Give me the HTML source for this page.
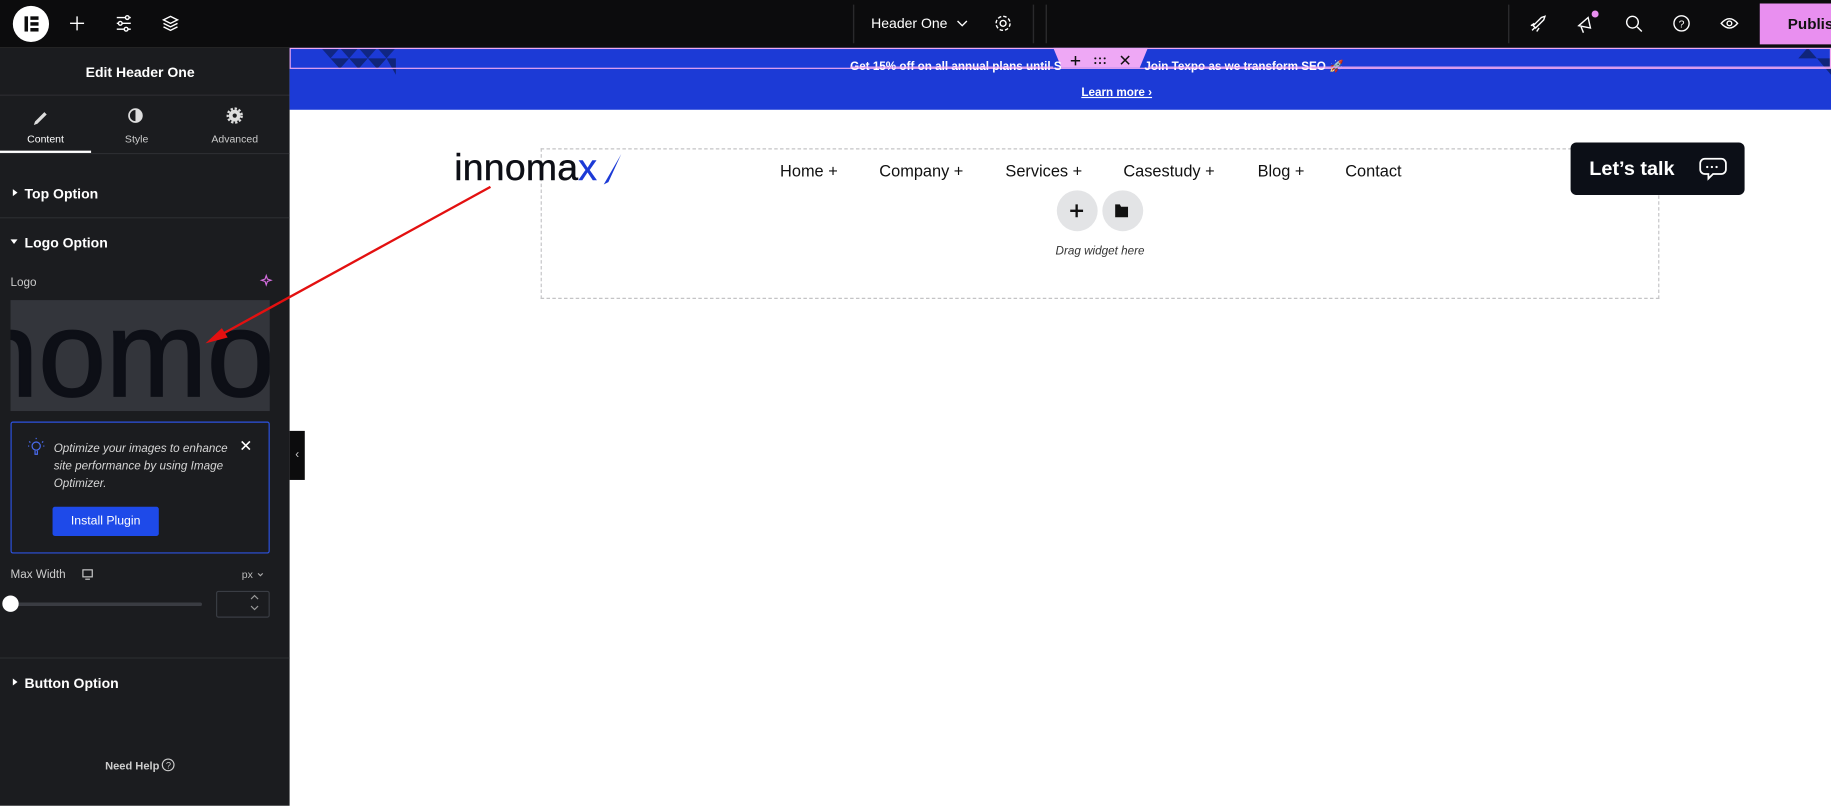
<!DOCTYPE html>
<html><head><meta charset="utf-8"><style>
*{margin:0;padding:0;box-sizing:border-box}
html,body{width:1831px;height:806px;overflow:hidden;background:#fff}
#w{width:1568px;height:690px;transform:scale(1.16773);transform-origin:0 0;position:relative;font-family:"Liberation Sans",sans-serif}
.a{position:absolute}
.t{position:absolute;white-space:nowrap}
.sb{color:#fff;font-weight:bold;font-size:12px}
svg{position:absolute;overflow:visible}
</style></head><body><div id="w">
<!-- top bar -->
<div class="a" style="left:0;top:0;width:1568px;height:41px;background:#0c0c0d"></div>
<div class="a" style="left:11px;top:5px;width:31px;height:31px;border-radius:50%;background:#fff"></div>
<div class="a" style="left:21px;top:14px;width:3px;height:13px;background:#0c0c0d"></div>
<div class="a" style="left:26px;top:14px;width:7px;height:3px;background:#0c0c0d"></div>
<div class="a" style="left:26px;top:19px;width:7px;height:3px;background:#0c0c0d"></div>
<div class="a" style="left:26px;top:24px;width:7px;height:3px;background:#0c0c0d"></div>
<svg style="left:0;top:0" width="1568" height="41" fill="none" stroke="#fff" stroke-width="1.2">
<path d="M66 14v12M60 20h12"/>
<path d="M100 15h12M100 20h12M100 25h12"/><circle cx="109" cy="15" r="1.6" fill="#0c0c0d"/><circle cx="103" cy="20" r="1.6" fill="#0c0c0d"/><circle cx="108" cy="25" r="1.6" fill="#0c0c0d"/>
<path d="M146 14l6 3-6 3-6-3z M140 20l6 3 6-3 M140 23l6 3 6-3"/>
<path d="M731 4v33M885 4v33M896 4v33M1292 4v33" stroke="#2a2a2c"/>
<path d="M820 18l4 4 4-4"/>
<circle cx="859" cy="20" r="2.5"/><circle cx="859" cy="20" r="6" stroke-dasharray="3 1.7"/>
<path d="M1312 26l3-3m-2-1l7-7 3-1-1 3-7 7zM1311 22l3-2M1316 27l2-3"/>
<path d="M1352 22l8-7 2 9zM1354 23l2 5"/><circle cx="1366" cy="12" r="3" fill="#e98ff0" stroke="none"/>
<circle cx="1398" cy="19" r="5"/><path d="M1402 23l4 4"/>
<circle cx="1440" cy="20" r="6.5"/><text x="1437.5" y="23.5" fill="#fff" stroke="none" font-size="9" font-family="Liberation Sans">?</text>
<path d="M1474 20q7-8 14 0q-7 8-14 0z"/><circle cx="1481" cy="20" r="2"/>
</svg>
<div class="t" style="left:746px;top:13px;color:#fff;font-size:12px">Header One</div>
<div class="a" style="left:1507px;top:3px;width:61px;height:35px;background:#e98ff0"></div>
<div class="t" style="left:1531px;top:13px;font-size:13px;font-weight:bold;color:#111">Publis</div>

<!-- sidebar -->
<div class="a" style="left:0;top:41px;width:248px;height:649px;background:#1b1c1f"></div>
<div class="t sb" style="left:0;width:240px;text-align:center;top:55px">Edit Header One</div>
<div class="a" style="left:0;top:81px;width:248px;height:1px;background:#2c2d31"></div>
<svg style="left:0;top:0" width="248" height="690" fill="#ddd">
<path d="M30 104l8-8 2 2-8 8-3 1z"/>
<circle cx="116" cy="99" r="5.5" fill="none" stroke="#ddd" stroke-width="1.5"/><path d="M116 93.5a5.5 5.5 0 0 1 0 11z"/>
<circle cx="201" cy="99" r="5"/><circle cx="201" cy="99" r="6" fill="none" stroke="#ddd" stroke-width="2" stroke-dasharray="2 1.5"/><circle cx="201" cy="99" r="1.8" fill="#1b1c1f"/>
<path d="M11 162l4 3-4 3z M9 205l6 0-3 4z" fill="#fff"/>
<path d="M11 581l4 3-4 3z" fill="#fff"/>
<path d="M228 236l1 3 3 1-3 1-1 3-1-3-3-1 3-1z" fill="none" stroke="#d66ee0"/>
</svg>
<div class="t" style="left:0;width:78px;text-align:center;top:114px;color:#fff;font-size:9px">Content</div>
<div class="t" style="left:78px;width:78px;text-align:center;top:114px;color:#ccc;font-size:9px">Style</div>
<div class="t" style="left:162px;width:78px;text-align:center;top:114px;color:#ccc;font-size:9px">Advanced</div>
<div class="a" style="left:0;top:129px;width:78px;height:2px;background:#fff"></div>
<div class="a" style="left:0;top:131px;width:248px;height:1px;background:#2c2d31"></div>
<div class="t sb" style="left:21px;top:159px">Top Option</div>
<div class="a" style="left:0;top:186px;width:248px;height:1px;background:#2c2d31"></div>
<div class="t sb" style="left:21px;top:201px">Logo Option</div>
<div class="t" style="left:9px;top:237px;color:#ccc;font-size:10px">Logo</div>
<div class="a" style="left:9px;top:257px;width:222px;height:95px;background:#33353b;overflow:hidden">
<div class="t" style="left:-34px;top:-12px;font-size:104px;color:#0d0f16;letter-spacing:0px;-webkit-text-stroke:1.5px #0d0f16">nomo</div></div>
<div class="a" style="left:9px;top:361px;width:222px;height:113px;border:1px solid #2c52e0;border-radius:2px"></div>
<svg style="left:0;top:0" width="248" height="690" fill="none" stroke="#4a6cf0" stroke-width="1">
<circle cx="31" cy="382" r="3.5"/><path d="M30 386v3h2v-3M31 375v1M25 378l1 1M37 378l-1 1M24 382h1M37 382h1"/>
<path d="M207 378l7 7M214 378l-7 7" stroke="#fff" stroke-width="1.4"/>
<rect x="71" y="488" width="8" height="6" stroke="#ccc"/><path d="M73 496h4" stroke="#ccc"/>
<path d="M221 491l2 2 2-2" stroke="#aaa"/>
<path d="M215 513l3-3 3 3M215 519l3 3 3-3" stroke="#999"/>
<circle cx="144" cy="655" r="5" stroke="#ccc"/>
</svg>
<div class="t" style="left:46px;top:377px;color:#d6d6d6;font-size:10px;font-style:italic;line-height:15px">Optimize your images to enhance<br>site performance by using Image<br>Optimizer.</div>
<div class="a" style="left:45px;top:434px;width:91px;height:25px;background:#1e4ae9;border-radius:2px;color:#fff;font-size:10.5px;text-align:center;line-height:25px">Install Plugin</div>
<div class="t" style="left:9px;top:487px;color:#ccc;font-size:10px">Max Width</div>
<div class="t" style="left:207px;top:487px;color:#bbb;font-size:9px">px</div>
<div class="a" style="left:9px;top:516px;width:164px;height:3px;background:#3a3c42;border-radius:2px"></div>
<div class="a" style="left:2px;top:510px;width:14px;height:14px;background:#fff;border-radius:50%"></div>
<div class="a" style="left:185px;top:506px;width:46px;height:23px;border:1px solid #3a3d44;border-radius:2px"></div>
<div class="a" style="left:0;top:563px;width:248px;height:1px;background:#2c2d31"></div>
<div class="t sb" style="left:21px;top:578px">Button Option</div>
<div class="t" style="left:90px;top:651px;color:#ccc;font-size:9.5px;font-weight:bold">Need Help</div>
<div class="t" style="left:142px;top:651px;color:#ccc;font-size:8px">?</div>
<div class="a" style="left:248px;top:369px;width:13px;height:42px;background:#0c0c0d;color:#ccc;font-size:10px;line-height:42px;text-align:center">‹</div>

<!-- banner -->
<div class="a" style="left:248px;top:41px;width:1320px;height:53px;background:#1c3ad6"></div>
<svg style="left:0;top:0" width="1568" height="100" fill="#10257a">
<path d="M275 41h16l-8 9zM291 41h16l-8 9zM307 41h16l-8 9zM323 41h16l-8 9z" opacity="0.9"/>
<path d="M283 50h16l-8 9zM299 50h16l-8 9zM315 50h16l-8 9zM331 50h8v14z"/>
<path d="M1548 41l8 9h-16zM1556 50h12v14z"/>
<rect x="248.5" y="41.5" width="1319" height="17" fill="none" stroke="#f0a8f0" stroke-width="1"/>
<path d="M902 41h81l-7 17h-67z" fill="#eea8f5"/>
<path d="M917 52h8M921 48v8M960 48l7 7M967 48l-7 7" stroke="#111" stroke-width="1.3"/>
<g fill="#111"><circle cx="938" cy="50" r=".9"/><circle cx="942" cy="50" r=".9"/><circle cx="946" cy="50" r=".9"/><circle cx="938" cy="54" r=".9"/><circle cx="942" cy="54" r=".9"/><circle cx="946" cy="54" r=".9"/></g>
</svg>
<div class="t" style="left:728px;top:52px;color:#fff;font-size:10px;font-weight:bold">Get 15% off on all annual plans until S</div>
<div class="t" style="left:980px;top:52px;color:#fff;font-size:10px;font-weight:bold">Join Texpo as we transform SEO 🚀</div>
<div class="a" style="left:728px;top:57px;width:174px;height:1px;background:#f0a8f0"></div>
<div class="a" style="left:983px;top:57px;width:585px;height:1px;background:#f0a8f0"></div>
<div class="t" style="left:926px;top:74px;color:#fff;font-size:10px;font-weight:bold;text-decoration:underline">Learn more ›</div>

<!-- header -->
<div class="a" style="left:463px;top:127px;width:958px;height:129px;border:1px dashed #c4c4c6"></div>
<div class="t" style="left:389px;top:125px;font-size:32px;color:#0d0f16;letter-spacing:0.2px;-webkit-text-stroke:0.35px #0d0f16">innoma<span style="color:#1c3ad6;-webkit-text-stroke:0.35px #1c3ad6">x</span></div>
<svg style="left:0;top:0" width="1568" height="300"><path d="M517 158l15-26-11 24z" fill="#1c3ad6"/></svg>
<div class="t" style="left:668px;top:138px;font-size:14px;color:#111">Home +</div>
<div class="t" style="left:753px;top:138px;font-size:14px;color:#111">Company +</div>
<div class="t" style="left:861px;top:138px;font-size:14px;color:#111">Services +</div>
<div class="t" style="left:962px;top:138px;font-size:14px;color:#111">Casestudy +</div>
<div class="t" style="left:1077px;top:138px;font-size:14px;color:#111">Blog +</div>
<div class="t" style="left:1152px;top:138px;font-size:14px;color:#111">Contact</div>
<div class="a" style="left:905px;top:163px;width:35px;height:35px;border-radius:50%;background:#e3e4e6"></div>
<div class="a" style="left:944px;top:163px;width:35px;height:35px;border-radius:50%;background:#e3e4e6"></div>
<svg style="left:0;top:0" width="1568" height="300"><path d="M922 175v11M916.5 180.5h11" stroke="#111" stroke-width="2"/><path d="M955 175h4l1 2h6v9h-11z" fill="#111"/></svg>
<div class="t" style="left:842px;width:200px;text-align:center;top:210px;font-size:10px;font-style:italic;color:#333">Drag widget here</div>
<div class="a" style="left:1345px;top:122px;width:149px;height:45px;background:#0c0f17;border-radius:5px"></div>
<div class="t" style="left:1361px;top:135px;color:#fff;font-size:17px;font-weight:bold">Let’s talk</div>
<svg style="left:0;top:0" width="1568" height="300" fill="none" stroke="#fff" stroke-width="1.5"><path d="M1460 136h14a4 4 0 0 1 4 4v5a4 4 0 0 1-4 4h-7l-4 4v-4h-3a4 4 0 0 1-4-4v-5a4 4 0 0 1 4-4z"/><g fill="#fff" stroke="none"><circle cx="1462" cy="143" r="1"/><circle cx="1466" cy="143" r="1"/><circle cx="1470" cy="143" r="1"/></g></svg>
<!-- red arrow -->
<svg style="left:0;top:0" width="1568" height="690"><path d="M420 160L185 289" stroke="#e31010" stroke-width="2"/><path d="M176 294l14-13 5 8z" fill="#e31010"/></svg>
</div></body></html>
